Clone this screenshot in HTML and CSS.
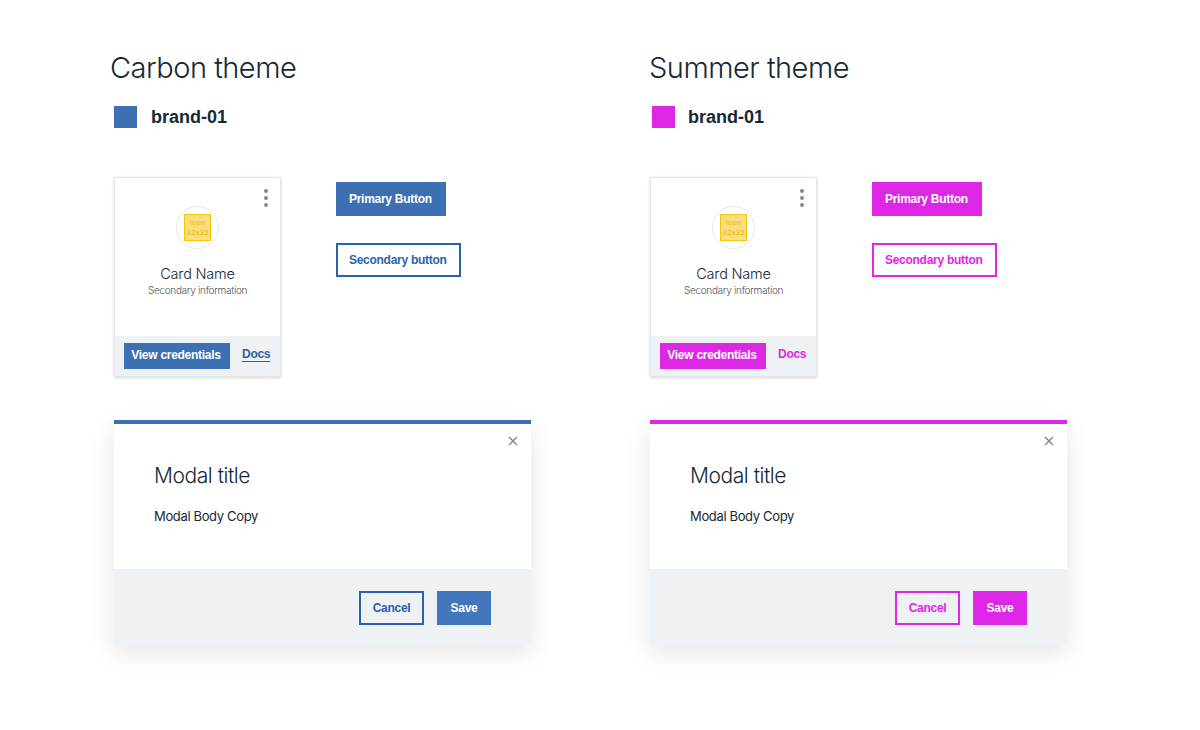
FILE: index.html
```html
<!DOCTYPE html>
<html lang="en">
<head>
    <meta charset="UTF-8">
    <title>Themes</title>
    <link rel="stylesheet" href="styles.css">
</head>
<body>
    <main class="themes">
        <section class="theme theme-carbon">
            <h1 class="theme-title">Carbon theme</h1>
            <div class="token">
                <span class="swatch"></span>
                <span class="token-name">brand-01</span>
            </div>
            <div class="samples">
                <div class="card">
                    <div class="card-body">
                        <div class="card-menu"><span></span><span></span><span></span></div>
                        <div class="card-icon"><div class="icon-box">Icon<br>32x32</div></div>
                        <div class="card-name">Card Name</div>
                        <div class="card-info">Secondary information</div>
                    </div>
                    <div class="card-footer">
                        <a class="btn btn-small" href="#">View credentials</a>
                        <a class="card-link" href="#">Docs</a>
                    </div>
                </div>
                <div class="buttons">
                    <a class="btn btn-primary" href="#">Primary Button</a>
                    <a class="btn btn-secondary" href="#">Secondary button</a>
                </div>
            </div>
            <div class="modal">
                <div class="modal-body">
                    <svg class="modal-close" width="10" height="10" viewBox="0 0 10 10"><path d="M1 1l8 8M9 1l-8 8"/></svg>
                    <h2 class="modal-title">Modal title</h2>
                    <p class="modal-copy">Modal Body Copy</p>
                </div>
                <div class="modal-footer">
                    <a class="btn btn-secondary btn-cancel" href="#">Cancel</a>
                    <a class="btn btn-primary btn-save" href="#">Save</a>
                </div>
            </div>
        </section>

        <section class="theme theme-summer">
            <h1 class="theme-title">Summer theme</h1>
            <div class="token">
                <span class="swatch"></span>
                <span class="token-name">brand-01</span>
            </div>
            <div class="samples">
                <div class="card">
                    <div class="card-body">
                        <div class="card-menu"><span></span><span></span><span></span></div>
                        <div class="card-icon"><div class="icon-box">Icon<br>32x32</div></div>
                        <div class="card-name">Card Name</div>
                        <div class="card-info">Secondary information</div>
                    </div>
                    <div class="card-footer">
                        <a class="btn btn-small" href="#">View credentials</a>
                        <a class="card-link" href="#">Docs</a>
                    </div>
                </div>
                <div class="buttons">
                    <a class="btn btn-primary" href="#">Primary Button</a>
                    <a class="btn btn-secondary" href="#">Secondary button</a>
                </div>
            </div>
            <div class="modal">
                <div class="modal-body">
                    <svg class="modal-close" width="10" height="10" viewBox="0 0 10 10"><path d="M1 1l8 8M9 1l-8 8"/></svg>
                    <h2 class="modal-title">Modal title</h2>
                    <p class="modal-copy">Modal Body Copy</p>
                </div>
                <div class="modal-footer">
                    <a class="btn btn-secondary btn-cancel" href="#">Cancel</a>
                    <a class="btn btn-primary btn-save" href="#">Save</a>
                </div>
            </div>
        </section>
    </main>
</body>
</html>
```

FILE: styles.css
```css
*,::after,::before{
    padding: 0;
    margin: 0;
    box-sizing: border-box;
}

html{
    background: #fff;
}

body{
    font-family: 'Inter', 'Liberation Sans', sans-serif;
    color: #152935;
    min-height: 730px;
}

a{
    text-decoration: none;
    display: inline-block;
}

.themes{
    display: flex;
    padding-top: 50px;
    padding-left: 114px;
    padding-bottom: 85px;
}

.theme{
    width: 417px;
}

.theme-carbon{
    --brand: #3d70b2;
    --brand-line: #2a62ad;
    --brand-save: #4276bd;
    margin-right: 119px;
}

.theme-summer{
    --brand: #de26e6;
    --brand-line: #de26e6;
    --brand-save: #de26e6;
}

.theme-title{
    font-size: 29px;
    line-height: 36px;
    font-weight: 300;
    letter-spacing: -0.5px;
    margin-left: -4px;
}

.theme-summer .theme-title{
    margin-left: -1px;
}

.token{
    display: flex;
    align-items: center;
    margin-top: 20px;
}

.swatch{
    width: 23px;
    height: 22px;
    background: var(--brand);
    margin-right: 14px;
}

.theme-summer .token{
    margin-left: 2px;
}

.theme-summer .swatch{
    margin-right: 13px;
}

.token-name{
    font-family: 'Liberation Sans', sans-serif;
    font-size: 18px;
    font-weight: bold;
}

.samples{
    display: flex;
    margin-top: 49px;
}

.card{
    width: 167px;
    height: 200px;
    border: 1px solid #e4e7ea;
    box-shadow: 0 1px 3px rgba(0, 0, 0, 0.16);
    display: flex;
    flex-direction: column;
}

.card-body{
    flex: 1;
    position: relative;
    text-align: center;
    padding-top: 28px;
}

.card-menu{
    position: absolute;
    top: 11px;
    right: 12px;
    display: flex;
    flex-direction: column;
    gap: 3px;
}

.card-menu span{
    width: 4px;
    height: 4px;
    border-radius: 50%;
    background: #7f8c97;
}

.card-icon{
    width: 43px;
    height: 43px;
    margin: 0 auto;
    border: 1px solid #e3e7eb;
    border-radius: 50%;
    display: flex;
    align-items: center;
    justify-content: center;
}

.icon-box{
    width: 27px;
    height: 27px;
    background: #f8df7c;
    border: 1px solid #f3c412;
    color: #efbe1e;
    font-family: 'Roboto', 'Liberation Sans', sans-serif;
    font-size: 8px;
    font-weight: 500;
    line-height: 10px;
    padding-top: 3px;
}

.card-name{
    font-weight: 300;
    font-size: 14.5px;
    line-height: 18px;
    letter-spacing: -0.2px;
    margin-top: 16px;
}

.card-info{
    font-size: 10px;
    font-weight: 300;
    line-height: 14px;
    letter-spacing: -0.3px;
    color: #46535e;
}

.card-footer{
    height: 40px;
    background: #eff2f5;
    display: flex;
    align-items: flex-start;
    padding: 7px 0 0 9px;
}

.btn{
    font-family: 'Liberation Sans', sans-serif;
    font-size: 12px;
    letter-spacing: -0.28px;
    font-weight: bold;
    text-align: center;
    background: var(--brand);
    color: #fff;
}

.btn-small{
    width: 106px;
    height: 26px;
    line-height: 25px;
    padding-right: 2px;
}

.card-link{
    font-family: 'Liberation Sans', sans-serif;
    font-size: 12px;
    letter-spacing: -0.28px;
    font-weight: bold;
    color: var(--brand-line);
    margin: 4px 0 0 12px;
    line-height: 14px;
}

.theme-carbon .card-link{
    border-bottom: 1px solid var(--brand-line);
}

.buttons{
    display: flex;
    flex-direction: column;
    align-items: flex-start;
    gap: 27px;
    margin: 5px 0 0 55px;
}

.btn-primary{
    height: 34px;
    line-height: 34px;
    padding: 0 14px 0 13px;
    border: 0;
}

.btn-secondary{
    height: 34px;
    line-height: 30px;
    padding: 0 12px 0 11px;
    background: #fff;
    border: 2px solid var(--brand-line);
    color: var(--brand-line);
}

.modal{
    margin-top: 43px;
    border-top: 4px solid var(--brand);
    box-shadow: 0 8px 24px rgba(0, 0, 0, 0.1);
}

.modal-body{
    position: relative;
    height: 145px;
    padding: 39px 40px 0;
}

.modal-close{
    position: absolute;
    top: 12px;
    right: 13px;
}

.modal-close path{
    stroke: #7f8c97;
    stroke-width: 1.5;
    fill: none;
}

.modal-title{
    font-size: 21px;
    font-weight: 300;
    line-height: 26px;
    letter-spacing: -0.45px;
}

.modal-copy{
    font-size: 13px;
    font-weight: 400;
    line-height: 18px;
    letter-spacing: -0.35px;
    margin-top: 18px;
}

.modal-footer{
    height: 76px;
    background: #eff2f5;
    display: flex;
    justify-content: flex-end;
    gap: 13px;
    padding: 22px 40px 0 0;
}

.btn-cancel{
    width: 65px;
    padding: 0;
    background: #eff2f5;
}

.btn-save{
    width: 54px;
    padding: 0;
    background: var(--brand-save);
}
```
